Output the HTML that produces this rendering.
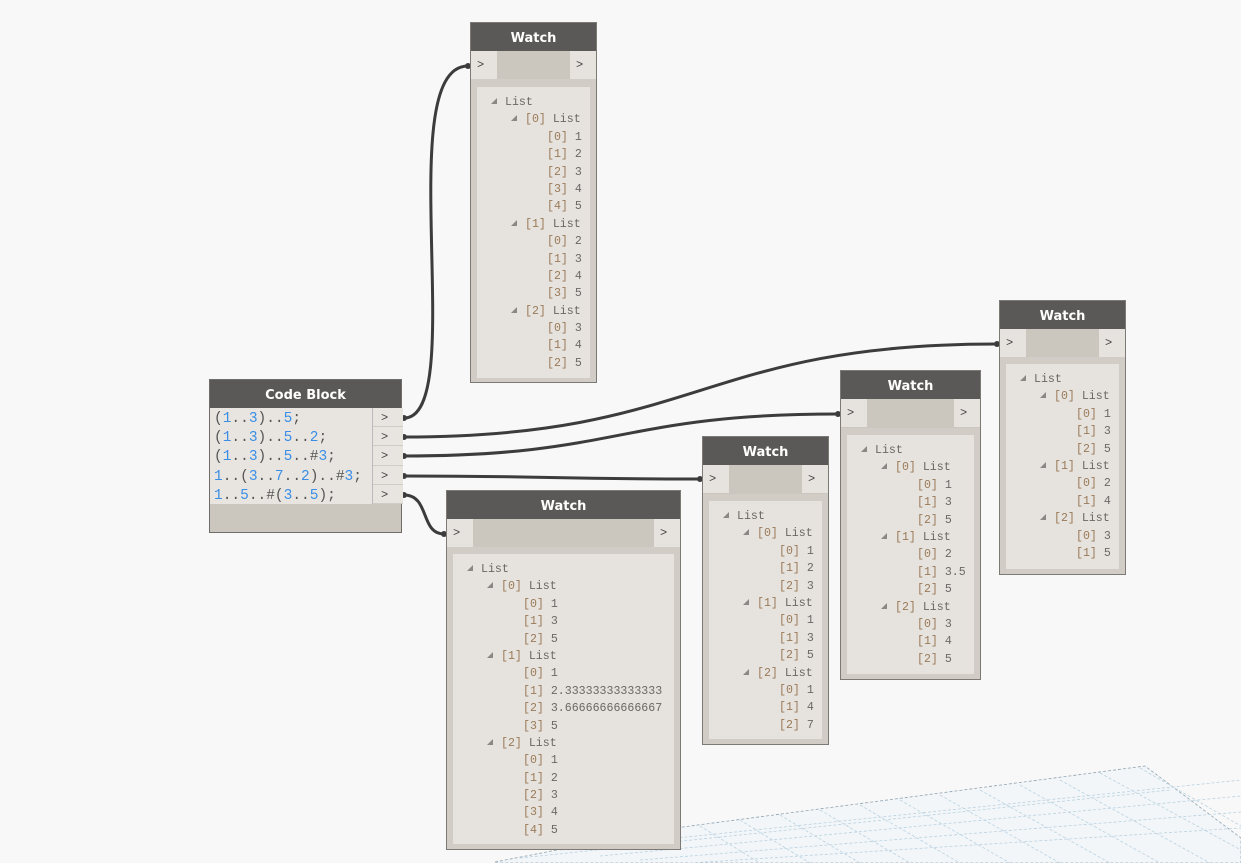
<!DOCTYPE html>
<html><head><meta charset="utf-8"><style>
body{margin:0;width:1241px;height:863px;background:#f8f8f8;position:relative;overflow:hidden;font-family:"Liberation Sans",sans-serif}
.n{position:absolute;background:#d1cdc6;border:1px solid #7d7a76;box-sizing:border-box}
.h{height:28px;background:#5b5957;color:#fff;font-weight:bold;text-align:center;line-height:31px;font-family:"DejaVu Sans",sans-serif;font-size:13px}
.pr{position:relative;height:28px;background:#cbc7bf}
.pl,.pp{position:absolute;top:0;height:28px;width:26px;background:#e6e3de;font-family:"Liberation Mono",monospace;font-size:12px;line-height:28px;color:#444;padding-left:6px;box-sizing:border-box}
.pl{left:0}.pp{right:0}
.pn{position:absolute;left:6px;right:6px;background:#e6e3de;font-family:"Liberation Mono",monospace;font-size:11.6px;line-height:17.4px;color:#6a6864;padding-top:7px;box-sizing:border-box;white-space:nowrap;overflow:hidden}
.pn div{height:17.4px}
.t{display:inline-block;width:0;height:0;border-left:6px solid transparent;border-bottom:6px solid #8a8884;margin-right:8px;vertical-align:1px}
.a{padding-left:14px}.b{padding-left:34px}.c{padding-left:70px}
.i{color:#9a7a58}
.cb{position:absolute;left:209px;top:379px;width:193px;height:154px;background:#cbc7bf;border:1px solid #6f6c69;box-sizing:border-box}
.cl{position:absolute;left:0;top:28px;width:163px;height:96px;background:#e8e5e0;font-family:"Liberation Mono",monospace;font-size:14.5px;line-height:19.2px;color:#555;padding:2px 0 0 4px;box-sizing:border-box;white-space:pre}
.cp{position:absolute;left:162px;top:28px;width:30px;height:96px;background:#e8e5e0;border-left:1px solid #bbb}
.cp div{height:19.2px;border-bottom:1px solid #cfccc6;box-sizing:border-box;font-family:"Liberation Mono",monospace;font-size:12px;line-height:21px;padding-left:8px;color:#444}
.bl{color:#3a8ee6}
</style></head><body>
<svg width="1241" height="863" style="position:absolute;left:0;top:0">
<g stroke="#b9d2e2" stroke-width="0.8" fill="none" stroke-dasharray="3 2">
<polygon points="495,862 660,830 1145,766 1241,838 1241,863 495,863" fill="#f3f6f8" stroke="#8fa3b2"/>
<path d="M560,850 L1241,780 M600,856 L1241,796 M640,860 L1241,812 M690,863 L1241,828 M520,858 L1170,790"/>
<path d="M700,826 L760,863 M740,820 L810,863 M780,815 L860,863 M820,810 L910,863 M860,805 L960,863 M900,800 L1010,863 M940,795 L1060,863 M980,790 L1110,863 M1020,785 L1160,863 M1060,780 L1210,863 M1100,773 L1241,850 M1140,768 L1241,826"/>
</g>
<g stroke="#3c3c3c" stroke-width="3" fill="none">
<path d="M404,418 C470,418 390,66 468,66"/>
<path d="M404,437 C700,437 700,344 997,344"/>
<path d="M404,456 C620,456 620,414 838,414"/>
<path d="M404,476 C550,476 550,479 700,479"/>
<path d="M404,495 C430,495 420,534 444,534"/>
</g>
<g fill="#3c3c3c"><circle cx="404" cy="418" r="3"/><circle cx="404" cy="437" r="3"/><circle cx="404" cy="456" r="3"/><circle cx="404" cy="476" r="3"/><circle cx="404" cy="495" r="3"/>
<circle cx="468" cy="66" r="3"/><circle cx="997" cy="344" r="3"/><circle cx="838" cy="414" r="3"/><circle cx="700" cy="479" r="3"/><circle cx="444" cy="534" r="3"/></g>
</svg>

<div class="cb"><div class="h">Code Block</div>
<div class="cl">(<span class="bl">1</span>..<span class="bl">3</span>)..<span class="bl">5</span>;
(<span class="bl">1</span>..<span class="bl">3</span>)..<span class="bl">5</span>..<span class="bl">2</span>;
(<span class="bl">1</span>..<span class="bl">3</span>)..<span class="bl">5</span>..#<span class="bl">3</span>;
<span class="bl">1</span>..(<span class="bl">3</span>..<span class="bl">7</span>..<span class="bl">2</span>)..#<span class="bl">3</span>;
<span class="bl">1</span>..<span class="bl">5</span>..#(<span class="bl">3</span>..<span class="bl">5</span>);</div>
<div class="cp"><div>&gt;</div><div>&gt;</div><div>&gt;</div><div>&gt;</div><div>&gt;</div></div>
</div>

<div class="n" style="left:470px;top:22px;width:127px;height:361px"><div class="h">Watch</div><div class="pr"><div class="pl">&gt;</div><div class="pp">&gt;</div></div>
<div class="pn" style="top:64px;height:291px">
<div class="a"><span class="t"></span>List</div>
<div class="b"><span class="t"></span><span class="i">[0]</span> List</div>
<div class="c"><span class="i">[0]</span> 1</div><div class="c"><span class="i">[1]</span> 2</div><div class="c"><span class="i">[2]</span> 3</div><div class="c"><span class="i">[3]</span> 4</div><div class="c"><span class="i">[4]</span> 5</div>
<div class="b"><span class="t"></span><span class="i">[1]</span> List</div>
<div class="c"><span class="i">[0]</span> 2</div><div class="c"><span class="i">[1]</span> 3</div><div class="c"><span class="i">[2]</span> 4</div><div class="c"><span class="i">[3]</span> 5</div>
<div class="b"><span class="t"></span><span class="i">[2]</span> List</div>
<div class="c"><span class="i">[0]</span> 3</div><div class="c"><span class="i">[1]</span> 4</div><div class="c"><span class="i">[2]</span> 5</div>
</div></div>

<div class="n" style="left:999px;top:300px;width:127px;height:275px"><div class="h">Watch</div><div class="pr"><div class="pl">&gt;</div><div class="pp">&gt;</div></div>
<div class="pn" style="top:63px;height:205px">
<div class="a"><span class="t"></span>List</div>
<div class="b"><span class="t"></span><span class="i">[0]</span> List</div>
<div class="c"><span class="i">[0]</span> 1</div><div class="c"><span class="i">[1]</span> 3</div><div class="c"><span class="i">[2]</span> 5</div>
<div class="b"><span class="t"></span><span class="i">[1]</span> List</div>
<div class="c"><span class="i">[0]</span> 2</div><div class="c"><span class="i">[1]</span> 4</div>
<div class="b"><span class="t"></span><span class="i">[2]</span> List</div>
<div class="c"><span class="i">[0]</span> 3</div><div class="c"><span class="i">[1]</span> 5</div>
</div></div>

<div class="n" style="left:840px;top:370px;width:141px;height:310px"><div class="h">Watch</div><div class="pr" style="height:29px"><div class="pl">&gt;</div><div class="pp">&gt;</div></div>
<div class="pn" style="top:64px;height:239px">
<div class="a"><span class="t"></span>List</div>
<div class="b"><span class="t"></span><span class="i">[0]</span> List</div>
<div class="c"><span class="i">[0]</span> 1</div><div class="c"><span class="i">[1]</span> 3</div><div class="c"><span class="i">[2]</span> 5</div>
<div class="b"><span class="t"></span><span class="i">[1]</span> List</div>
<div class="c"><span class="i">[0]</span> 2</div><div class="c"><span class="i">[1]</span> 3.5</div><div class="c"><span class="i">[2]</span> 5</div>
<div class="b"><span class="t"></span><span class="i">[2]</span> List</div>
<div class="c"><span class="i">[0]</span> 3</div><div class="c"><span class="i">[1]</span> 4</div><div class="c"><span class="i">[2]</span> 5</div>
</div></div>

<div class="n" style="left:702px;top:436px;width:127px;height:309px"><div class="h">Watch</div><div class="pr" style="height:29px"><div class="pl">&gt;</div><div class="pp">&gt;</div></div>
<div class="pn" style="top:64px;height:238px">
<div class="a"><span class="t"></span>List</div>
<div class="b"><span class="t"></span><span class="i">[0]</span> List</div>
<div class="c"><span class="i">[0]</span> 1</div><div class="c"><span class="i">[1]</span> 2</div><div class="c"><span class="i">[2]</span> 3</div>
<div class="b"><span class="t"></span><span class="i">[1]</span> List</div>
<div class="c"><span class="i">[0]</span> 1</div><div class="c"><span class="i">[1]</span> 3</div><div class="c"><span class="i">[2]</span> 5</div>
<div class="b"><span class="t"></span><span class="i">[2]</span> List</div>
<div class="c"><span class="i">[0]</span> 1</div><div class="c"><span class="i">[1]</span> 4</div><div class="c"><span class="i">[2]</span> 7</div>
</div></div>

<div class="n" style="left:446px;top:490px;width:235px;height:360px"><div class="h">Watch</div><div class="pr"><div class="pl">&gt;</div><div class="pp">&gt;</div></div>
<div class="pn" style="top:63px;height:290px">
<div class="a"><span class="t"></span>List</div>
<div class="b"><span class="t"></span><span class="i">[0]</span> List</div>
<div class="c"><span class="i">[0]</span> 1</div><div class="c"><span class="i">[1]</span> 3</div><div class="c"><span class="i">[2]</span> 5</div>
<div class="b"><span class="t"></span><span class="i">[1]</span> List</div>
<div class="c"><span class="i">[0]</span> 1</div><div class="c"><span class="i">[1]</span> 2.33333333333333</div><div class="c"><span class="i">[2]</span> 3.66666666666667</div><div class="c"><span class="i">[3]</span> 5</div>
<div class="b"><span class="t"></span><span class="i">[2]</span> List</div>
<div class="c"><span class="i">[0]</span> 1</div><div class="c"><span class="i">[1]</span> 2</div><div class="c"><span class="i">[2]</span> 3</div><div class="c"><span class="i">[3]</span> 4</div><div class="c"><span class="i">[4]</span> 5</div>
</div></div>
</body></html>
